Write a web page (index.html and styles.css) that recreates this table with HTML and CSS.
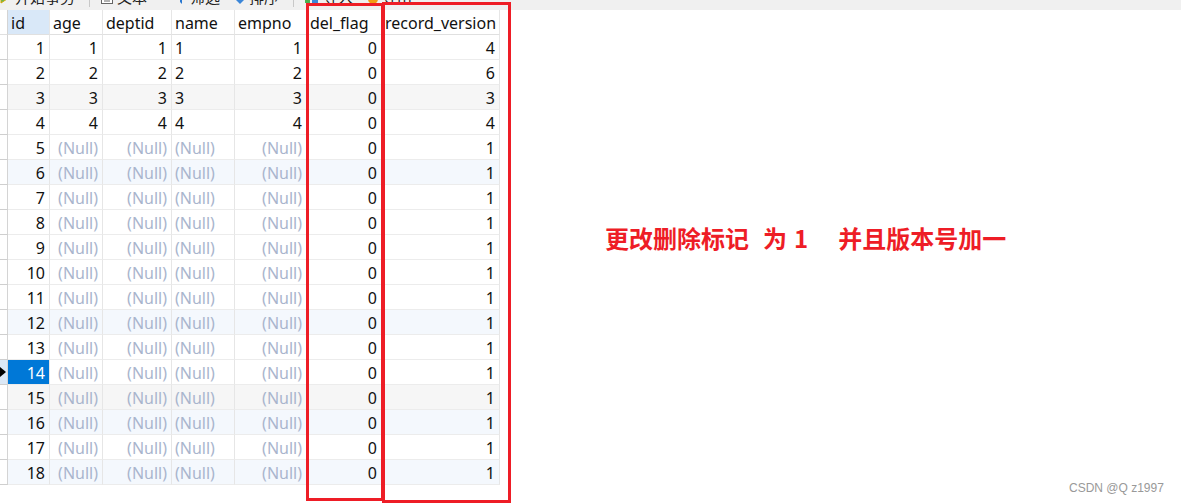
FILE: index.html
```html
<!DOCTYPE html>
<html>
<head>
<meta charset="utf-8">
<link rel="stylesheet" href="styles.css">
</head>
<body>
<div class="toolbar">
  <div class="tb-inner">
    <span class="tb-item tb-first"><svg class="ico" width="12" height="16" viewBox="0 0 12 16"><path d="M1 2 L10 8 L1 14 Z" fill="#5cb85c" stroke="#d8a800" stroke-width="1"/></svg><span>开始事务</span></span>
    <span class="tb-sep"></span>
    <span class="tb-item"><svg class="ico" width="14" height="16" viewBox="0 0 14 16"><rect x="1.5" y="1.5" width="11" height="13" fill="#fff" stroke="#666"/><path d="M4 9h6M4 12h6" stroke="#666"/></svg><span>文本</span></span>
    <span class="tb-item tb-filter"><svg class="ico" width="12" height="16" viewBox="0 0 12 16"><path d="M1 2h10L7 8v7L5 13V8Z" fill="#2b78d0"/></svg><span>筛选</span></span>
    <span class="tb-item"><svg class="ico" width="12" height="16" viewBox="0 0 12 16"><path d="M6 5 L11 10 L6 15 L1 10 Z" fill="#3b86d8"/></svg><span>排序</span></span>
    <span class="tb-sep"></span>
    <span class="tb-item"><svg class="ico" width="16" height="16" viewBox="0 0 16 16"><rect x="1" y="6" width="5" height="8" fill="#4caf50"/><rect x="8" y="6" width="6" height="8" fill="#3b86d8"/></svg><span>导入</span></span>
    <span class="tb-item"><svg class="ico" width="12" height="16" viewBox="0 0 12 16"><circle cx="6" cy="10" r="5" fill="#f39c12"/></svg><span>导出</span></span>
  </div>
</div>

<div class="main">
  <div class="grid">
    <div class="row head">
      <div class="c g"></div>
      <div class="c h sel-h">id</div>
      <div class="c h">age</div>
      <div class="c h">deptid</div>
      <div class="c h">name</div>
      <div class="c h">empno</div>
      <div class="c h">del_flag</div>
      <div class="c h">record_version</div>
    </div>
    <div class="row"><div class="c g"></div><div class="c n">1</div><div class="c n">1</div><div class="c n">1</div><div class="c s">1</div><div class="c n">1</div><div class="c n">0</div><div class="c n">4</div></div>
    <div class="row"><div class="c g"></div><div class="c n">2</div><div class="c n">2</div><div class="c n">2</div><div class="c s">2</div><div class="c n">2</div><div class="c n">0</div><div class="c n">6</div></div>
    <div class="row grey"><div class="c g"></div><div class="c n">3</div><div class="c n">3</div><div class="c n">3</div><div class="c s">3</div><div class="c n">3</div><div class="c n">0</div><div class="c n">3</div></div>
    <div class="row"><div class="c g"></div><div class="c n">4</div><div class="c n">4</div><div class="c n">4</div><div class="c s">4</div><div class="c n">4</div><div class="c n">0</div><div class="c n">4</div></div>
    <div class="row"><div class="c g"></div><div class="c n">5</div><div class="c n nl">(Null)</div><div class="c n nl">(Null)</div><div class="c s nl">(Null)</div><div class="c n nl">(Null)</div><div class="c n">0</div><div class="c n">1</div></div>
    <div class="row blue"><div class="c g"></div><div class="c n">6</div><div class="c n nl">(Null)</div><div class="c n nl">(Null)</div><div class="c s nl">(Null)</div><div class="c n nl">(Null)</div><div class="c n">0</div><div class="c n">1</div></div>
    <div class="row"><div class="c g"></div><div class="c n">7</div><div class="c n nl">(Null)</div><div class="c n nl">(Null)</div><div class="c s nl">(Null)</div><div class="c n nl">(Null)</div><div class="c n">0</div><div class="c n">1</div></div>
    <div class="row"><div class="c g"></div><div class="c n">8</div><div class="c n nl">(Null)</div><div class="c n nl">(Null)</div><div class="c s nl">(Null)</div><div class="c n nl">(Null)</div><div class="c n">0</div><div class="c n">1</div></div>
    <div class="row"><div class="c g"></div><div class="c n">9</div><div class="c n nl">(Null)</div><div class="c n nl">(Null)</div><div class="c s nl">(Null)</div><div class="c n nl">(Null)</div><div class="c n">0</div><div class="c n">1</div></div>
    <div class="row"><div class="c g"></div><div class="c n">10</div><div class="c n nl">(Null)</div><div class="c n nl">(Null)</div><div class="c s nl">(Null)</div><div class="c n nl">(Null)</div><div class="c n">0</div><div class="c n">1</div></div>
    <div class="row"><div class="c g"></div><div class="c n">11</div><div class="c n nl">(Null)</div><div class="c n nl">(Null)</div><div class="c s nl">(Null)</div><div class="c n nl">(Null)</div><div class="c n">0</div><div class="c n">1</div></div>
    <div class="row blue"><div class="c g"></div><div class="c n">12</div><div class="c n nl">(Null)</div><div class="c n nl">(Null)</div><div class="c s nl">(Null)</div><div class="c n nl">(Null)</div><div class="c n">0</div><div class="c n">1</div></div>
    <div class="row"><div class="c g"></div><div class="c n">13</div><div class="c n nl">(Null)</div><div class="c n nl">(Null)</div><div class="c s nl">(Null)</div><div class="c n nl">(Null)</div><div class="c n">0</div><div class="c n">1</div></div>
    <div class="row"><div class="c g cur"><svg width="7" height="10" viewBox="0 0 7 10"><path d="M0 0 L6 5 L0 10 Z" fill="#000"/></svg></div><div class="c n sel">14</div><div class="c n nl">(Null)</div><div class="c n nl">(Null)</div><div class="c s nl">(Null)</div><div class="c n nl">(Null)</div><div class="c n">0</div><div class="c n">1</div></div>
    <div class="row grey"><div class="c g"></div><div class="c n">15</div><div class="c n nl">(Null)</div><div class="c n nl">(Null)</div><div class="c s nl">(Null)</div><div class="c n nl">(Null)</div><div class="c n">0</div><div class="c n">1</div></div>
    <div class="row blue"><div class="c g"></div><div class="c n">16</div><div class="c n nl">(Null)</div><div class="c n nl">(Null)</div><div class="c s nl">(Null)</div><div class="c n nl">(Null)</div><div class="c n">0</div><div class="c n">1</div></div>
    <div class="row"><div class="c g"></div><div class="c n">17</div><div class="c n nl">(Null)</div><div class="c n nl">(Null)</div><div class="c s nl">(Null)</div><div class="c n nl">(Null)</div><div class="c n">0</div><div class="c n">1</div></div>
    <div class="row blue"><div class="c g"></div><div class="c n">18</div><div class="c n nl">(Null)</div><div class="c n nl">(Null)</div><div class="c s nl">(Null)</div><div class="c n nl">(Null)</div><div class="c n">0</div><div class="c n">1</div></div>
  </div>
  <div class="note">
    <span>更改删除标记</span>
    <span class="w-wei">为</span>
    <span class="w-one">1</span>
    <span class="w-rest">并且版本号加一</span>
  </div>
</div>

<div class="redbox box1"></div>
<div class="redbox box2"></div>
<div class="watermark">CSDN @Q z1997</div>
</body>
</html>
```

FILE: styles.css
```css
html, body {
  margin: 0;
  padding: 0;
}
body {
  width: 1181px;
  height: 504px;
  overflow: hidden;
  background: #fff;
  position: relative;
  font-family: "Noto Sans", "Noto Sans CJK SC", sans-serif;
  color: #111;
}

.toolbar {
  height: 10px;
  background: #f0f0f0;
  overflow: hidden;
}
.tb-inner {
  display: flex;
  align-items: center;
  height: 20px;
  margin-top: -13px;
  font-size: 15px;
  line-height: 20px;
  font-family: "Noto Sans CJK SC", "Noto Sans", sans-serif;
  color: #222;
}
.tb-item {
  display: flex;
  align-items: center;
  gap: 3px;
  margin-right: 14px;
}
.tb-filter { margin-left: 14px; }
.ico { display: block; }
.tb-sep {
  width: 1px;
  height: 20px;
  background: #c8c8c8;
  margin: 0 10px 0 0;
}

.main {
  display: flex;
  align-items: flex-start;
}

.grid {
  width: 500px;
  font-size: 16px;
}
.row {
  display: grid;
  grid-template-columns: 8px 42px 53px 69px 63px 72px 75px 118px;
  height: 25px;
}
.c {
  box-sizing: border-box;
  height: 25px;
  padding-top: 1px;
  line-height: 24px;
  border-right: 1px solid #e6e6e6;
  border-bottom: 1px solid #ececec;
  white-space: nowrap;
  overflow: hidden;
}
.g {
  padding-top: 0;
  border-right: 1px solid #d4d4d4;
  border-bottom: 1px solid #cfcfcf;
  background: #fff;
}
.head .g { border-bottom: 1px solid #e0e0e0; }
.h {
  padding-left: 3px;
  border-bottom: 1px solid #e0e0e0;
}
.sel-h { background: #d9e8f8; }
.n {
  text-align: right;
  padding-right: 4px;
}
.s {
  text-align: left;
  padding-left: 3px;
}
.nl { color: #a9b5cd; }
.blue .c:not(.g) { background: #f4f8fd; }
.grey .c:not(.g) { background: #f6f6f6; }
.sel {
  background: #0078d7 !important;
  color: #fff;
}
.cur {
  background: #dbe8f6;
  display: flex;
  align-items: center;
}
.cur svg { display: block; }

.note {
  display: flex;
  align-items: baseline;
  margin-left: 105px;
  margin-top: 216px;
  font-family: "Noto Sans CJK SC", "Noto Sans", sans-serif;
  font-size: 24px;
  line-height: 24px;
  font-weight: 700;
  color: #ee1d26;
  white-space: nowrap;
}
.w-wei { margin-left: 14px; }
.w-one { margin-left: 7px; }
.w-rest { margin-left: 30px; }

.redbox {
  position: absolute;
  box-sizing: border-box;
  border: 3px solid #ee1d26;
}
.box1 {
  left: 306px;
  top: 3px;
  width: 78px;
  height: 498px;
}
.box2 {
  left: 382px;
  top: 2px;
  width: 129px;
  height: 501px;
}

.watermark {
  position: absolute;
  left: 1069px;
  top: 480px;
  font-family: "Liberation Sans", Arial, sans-serif;
  font-size: 12px;
  line-height: 16px;
  color: #999;
}
```
